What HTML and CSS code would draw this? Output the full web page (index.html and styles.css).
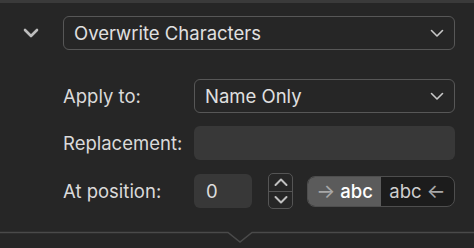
FILE: index.html
```html
<!DOCTYPE html>
<html lang="en">
<head>
    <meta charset="UTF-8">
    <title>Overwrite Characters</title>
    <link rel="stylesheet" href="styles.css">
</head>
<body>
    <div class="top-strip"></div>

    <!-- Cabeçalho da ação -->
    <div class="action-row">
        <div class="disclosure">
            <svg width="16" height="10" viewBox="0 0 16 10"><path d="M2 2 L8 8 L14 2" fill="none" stroke="#bdbdbd" stroke-width="2.6" stroke-linecap="round" stroke-linejoin="round"/></svg>
        </div>
        <div class="popup wide">
            <span>Overwrite Characters</span>
            <svg class="popup-chevron" width="14" height="9" viewBox="0 0 14 9"><path d="M1.5 1.5 L7 7 L12.5 1.5" fill="none" stroke="#c8c8c8" stroke-width="1.6" stroke-linecap="round" stroke-linejoin="round"/></svg>
        </div>
    </div>

    <!-- Opções -->
    <div class="options">
        <div class="opt-row">
            <label class="opt-label">Apply to:</label>
            <div class="popup grow">
                <span>Name Only</span>
                <svg class="popup-chevron" width="14" height="9" viewBox="0 0 14 9"><path d="M1.5 1.5 L7 7 L12.5 1.5" fill="none" stroke="#c8c8c8" stroke-width="1.6" stroke-linecap="round" stroke-linejoin="round"/></svg>
            </div>
        </div>
        <div class="opt-row">
            <label class="opt-label">Replacement:</label>
            <div class="field grow"></div>
        </div>
        <div class="opt-row">
            <label class="opt-label">At position:</label>
            <div class="field small">0</div>
            <div class="stepper">
                <div class="step">
                    <svg width="16" height="10" viewBox="0 0 16 10"><path d="M2.5 8 L8 2.5 L13.5 8" fill="none" stroke="#c0c0c0" stroke-width="2" stroke-linecap="round" stroke-linejoin="round"/></svg>
                </div>
                <div class="step">
                    <svg width="16" height="10" viewBox="0 0 16 10"><path d="M2.5 2 L8 7.5 L13.5 2" fill="none" stroke="#c0c0c0" stroke-width="2" stroke-linecap="round" stroke-linejoin="round"/></svg>
                </div>
            </div>
            <div class="segmented">
                <div class="seg selected"><span class="arrow">→</span> abc</div>
                <div class="seg">abc <span class="arrow">←</span></div>
            </div>
        </div>
    </div>

    <!-- Separador com entalhe -->
    <div class="separator">
        <svg width="474" height="14" viewBox="0 0 474 14"><path d="M0 1.5 H228 L240 11 L252 1.5 H474" fill="none" stroke="#4a4a4a" stroke-width="1.5"/></svg>
    </div>
</body>
</html>
```

FILE: styles.css
```css
body {
    margin: 0;
    width: 474px;
    height: 248px;
    overflow: hidden;
    background-color: #262626;
    font-family: Inter, "Open Sans", sans-serif;
    color: #dddddd;
}
.top-strip {
    height: 3px;
    background-color: #3a3a3a;
}
.action-row {
    display: flex;
    align-items: center;
    margin-top: 13px;
    padding-right: 19px;
}
.disclosure {
    width: 63px;
    display: flex;
    justify-content: center;
    padding-right: 2px;
    box-sizing: border-box;
}
.popup {
    display: flex;
    align-items: center;
    justify-content: space-between;
    height: 34px;
    box-sizing: border-box;
    border: 1.5px solid #575757;
    border-radius: 6px;
    padding: 0 10px 0 10px;
    font-size: 18.5px;
    color: #e0e0e0;
}
.wide {
    flex: 1;
}
.grow {
    flex: 1;
}
.options {
    display: flex;
    flex-direction: column;
    gap: 13px;
    margin-top: 29px;
    padding-left: 63px;
    padding-right: 19px;
}
.opt-row {
    display: flex;
    align-items: center;
}
.opt-label {
    width: 131px;
    font-size: 18.5px;
    color: #dadada;
}
.field {
    height: 34px;
    box-sizing: border-box;
    background-color: #383838;
    border-radius: 6px;
    font-size: 18.5px;
    display: flex;
    align-items: center;
    padding-left: 12px;
}
.field.small {
    width: 58px;
}
.stepper {
    margin-left: 16px;
    width: 25px;
    height: 36px;
    box-sizing: border-box;
    border: 1.5px solid #555555;
    border-radius: 5px;
    display: flex;
    flex-direction: column;
}
.step {
    flex: 1;
    display: flex;
    align-items: center;
    justify-content: center;
}
.step + .step {
    border-top: 1.5px solid #555555;
}
.segmented {
    margin-left: 14px;
    flex: 1;
    height: 31px;
    box-sizing: border-box;
    border: 1.5px solid #4e4e4e;
    border-radius: 8px;
    background-color: #1c1c1c;
    display: flex;
    overflow: hidden;
}
.seg {
    flex: 1;
    display: flex;
    align-items: center;
    justify-content: center;
    gap: 5px;
    font-size: 18.5px;
    color: #cfcfcf;
}
.seg.selected {
    background-color: #5b5b5b;
    color: #ffffff;
    font-weight: 500;
}
.arrow {
    color: #a8a8a8;
    font-weight: 400;
    font-size: 20px;
}
.separator {
    margin-top: 22px;
    line-height: 0;
}
```
